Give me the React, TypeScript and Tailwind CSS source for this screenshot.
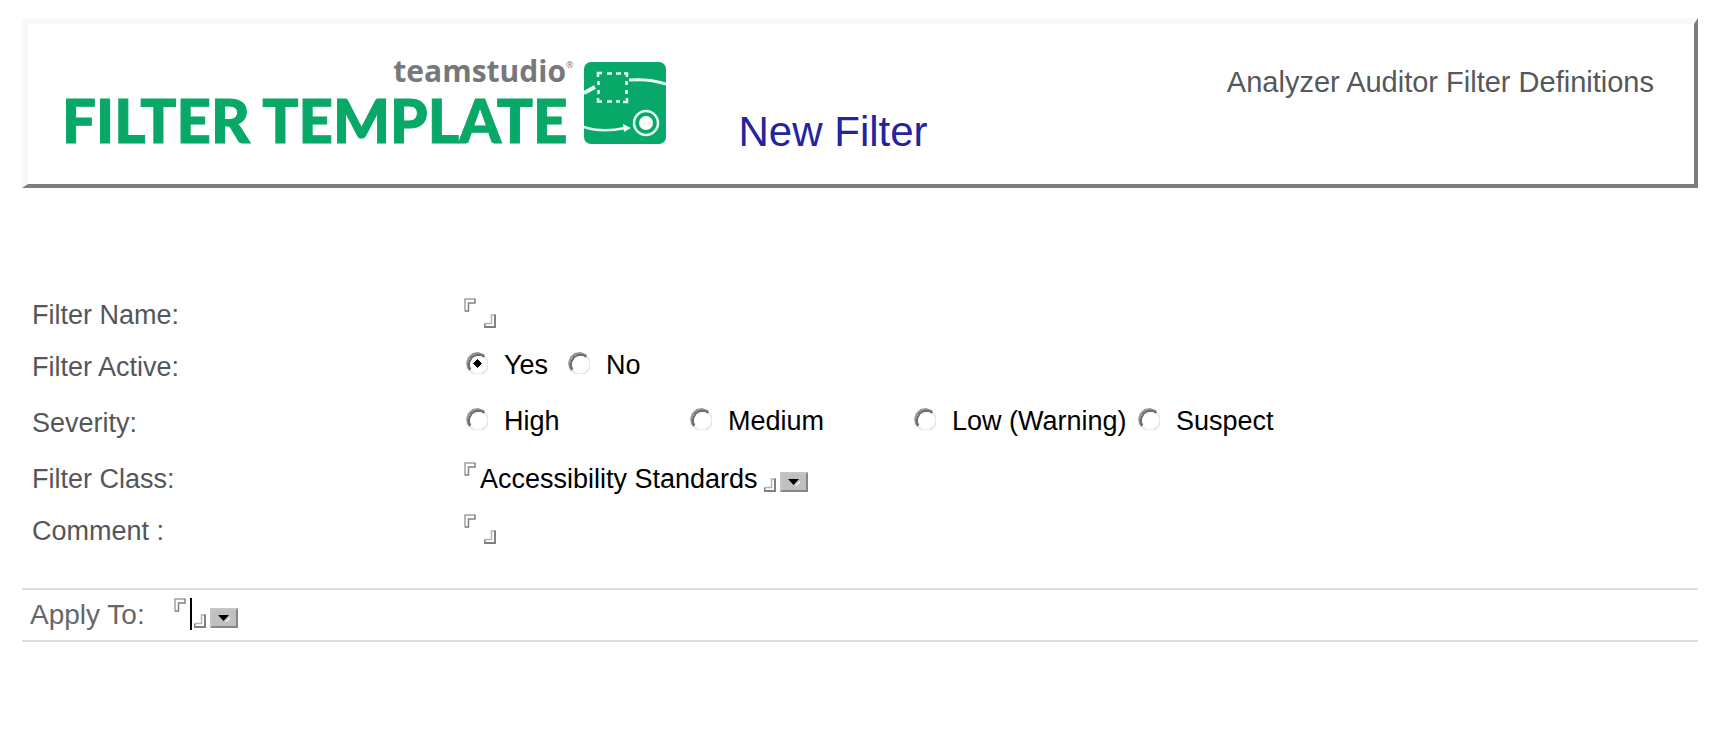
import { useState, type ReactNode } from 'react';

const severities = ['High', 'Medium', 'Low (Warning)', 'Suspect'];

function Corner({ end = false }: { end?: boolean }) {
  return (
    <svg viewBox="0 0 12 14" aria-hidden="true" className={`h-[14px] w-3 shrink-0 ${end ? 'self-end' : 'self-start'}`}>
      {end ? (
        <>
          <path d="M1 9.5h6.5V1H11" fill="none" stroke="#b4b4b4" strokeWidth="1.5" />
          <path d="M11 .5V13H.5V9.5" fill="none" stroke="#808080" strokeWidth="2" />
        </>
      ) : (
        <>
          <path d="M1 13.5V1h10.5" fill="none" stroke="#a0a0a0" strokeWidth="1.5" />
          <path d="M1 13h3.5V5H11V1" fill="none" stroke="#808080" strokeWidth="1.5" />
        </>
      )}
    </svg>
  );
}

function DropButton({ label }: { label: string }) {
  return (
    <button
      type="button"
      aria-label={label}
      className="ml-1 flex h-5 w-7 shrink-0 items-center justify-center self-end border-2 border-t-[#c6c6c6] border-r-[#868686] border-b-[#868686] border-l-[#c6c6c6] bg-[#c0c0c0]"
    >
      <svg viewBox="0 0 12 8" className="h-2 w-3">
        <path d="M2 8h5l5-5v2L8 8z" fill="#fff" />
        <path d="M0 1h11L5.500 7z" fill="#000" />
      </svg>
    </button>
  );
}

function Radio({ name, label, checked, onChange }: { name: string; label: string; checked: boolean; onChange: () => void }) {
  return (
    <label className="flex gap-4 whitespace-nowrap text-[27px] leading-[30px] text-black">
      <span className="relative mt-0.5 h-[22px] w-[22px] shrink-0">
        <input type="radio" name={name} checked={checked} onChange={onChange} className="absolute inset-0 h-full w-full appearance-none rounded-full" />
        <svg viewBox="0 0 22 22" aria-hidden="true" className="pointer-events-none absolute inset-0">
          <path d="M19.500 5.500A10 10 0 0 1 4.500 19" fill="none" stroke="#e4e4e4" strokeWidth="1.500" />
          <path d="M4 18.500A10 10 0 0 1 1.500 9.500L3 5.500L7 2L12 1L18.500 3.500" fill="none" stroke="#949494" strokeWidth="2" />
          <path d="M4.500 17.500A9 9 0 0 1 3.500 9.500L6 5L10 3L15 3L18.500 5" fill="none" stroke="#6c6c6c" strokeWidth="2" />
          {checked && <path d="M11.500 7.500L15.500 11.500L11.500 15.500L7.500 11.500Z" fill="#000" stroke="#000" strokeLinejoin="round" />}
        </svg>
      </span>
      {label}
    </label>
  );
}

function Row({ label, htmlFor, tall = false, children }: { label: string; htmlFor?: string; tall?: boolean; children: ReactNode }) {
  return (
    <div className={`flex items-start ${tall ? 'h-14' : 'h-[52px]'}`}>
      <label htmlFor={htmlFor} className="w-[432px] shrink-0 text-[27px] leading-[34px] text-[#55565a]">
        {label}
      </label>
      {children}
    </div>
  );
}

function TextField({ id }: { id: string }) {
  return (
    <div className="flex h-[30px]">
      <Corner />
      <input id={id} type="text" className="w-2 text-[27px] text-black outline-none" />
      <Corner end />
    </div>
  );
}

function Logo() {
  return (
    <div className="flex shrink-0 gap-2.5">
      <div className="flex flex-col items-end gap-[9px] whitespace-nowrap">
        <div className="flex font-['Open_Sans',sans-serif] text-[30px] leading-8 font-bold text-[#77787b]">
          teamstudio<span className="text-[9px] leading-5 font-normal">®</span>
        </div>
        <div className="pr-1.5 font-['Lato_Black',Lato,sans-serif] text-[60px] leading-[48px] font-black text-[#08a868] [-webkit-text-stroke:1px_#08a868]">
          FILTER TEMPLATE
        </div>
      </div>
      <svg viewBox="0 0 82 82" aria-hidden="true" className="h-[82px] w-[82px] self-end">
        <rect width="82" height="82" rx="7" fill="#08a868" />
        <g fill="none" stroke="#e9fff5">
          <path d="M0 31C4 29 7 27 11 25" strokeWidth="4" />
          <path d="M45 18C58 17 70 18 82 22" strokeWidth="3" />
          <path d="M0 65C12 69 27 69 41 66" strokeWidth="2.500" />
          <path d="M14 15V11H18M23 11.500h5M32 11.500h5M40 11.500H43V15M42.500 19v4M42.500 28v4M43 36V40H39M23 39.500h5M32 39.500h4M18 39.500H14V36M14.500 19v4M14.500 28v4" strokeWidth="2.500" />
          <circle cx="62" cy="61" r="12" strokeWidth="2.500" />
        </g>
        <path d="M39 62L47 66L40 70Z" fill="#e9fff5" />
        <circle cx="62" cy="61" r="7" fill="#fff" />
      </svg>
    </div>
  );
}

export default function App() {
  const [active, setActive] = useState('Yes');
  const [severity, setSeverity] = useState('');

  return (
    <main className="min-h-screen bg-white pt-[18px] pr-[26px] pl-[22px] font-['Liberation_Sans',Arial,sans-serif]">
      <header className="flex items-start border-t-[6px] border-r-4 border-b-4 border-l-[6px] border-t-[#f8f8fa] border-r-[#7d7d7d] border-b-[#7d7d7d] border-l-[#f8f8fc] pt-[31px] pr-10 pb-7 pl-[34px]">
        <Logo />
        <h1 className="mt-[53px] ml-[73px] text-[42px] leading-[48px] whitespace-nowrap text-[#24249c]">New Filter</h1>
        <p className="mt-[11px] ml-auto text-[29px] leading-8 whitespace-nowrap text-[#55585c]">Analyzer Auditor Filter Definitions</p>
      </header>

      <form>
        <div className="mt-[110px] pl-[10px]">
          <Row label="Filter Name:" htmlFor="filter-name">
            <TextField id="filter-name" />
          </Row>
          <Row label="Filter Active:" tall>
            <div className="flex gap-5 pl-0.5">
              {['Yes', 'No'].map((v) => (
                <Radio key={v} name="active" label={v} checked={active === v} onChange={() => setActive(v)} />
              ))}
            </div>
          </Row>
          <Row label="Severity:" tall>
            <div className="grid grid-cols-[repeat(4,224px)] pl-0.5">
              {severities.map((v) => (
                <Radio key={v} name="severity" label={v} checked={severity === v} onChange={() => setSeverity(v)} />
              ))}
            </div>
          </Row>
          <Row label="Filter Class:" htmlFor="filter-class">
            <div className="flex h-[30px]">
              <Corner />
              <select id="filter-class" className="mr-1.5 ml-1 h-[34px] appearance-none text-[27px] leading-[34px] text-black outline-none">
                <option>Accessibility Standards</option>
              </select>
              <Corner end />
              <DropButton label="Choose filter class" />
            </div>
          </Row>
          <Row label="Comment :" htmlFor="comment">
            <TextField id="comment" />
          </Row>
        </div>

        <div className="mt-[22px] flex border-y-2 border-[#dedede] py-2 pl-2">
          <label htmlFor="apply-to" className="w-36 shrink-0 text-[28px] leading-[34px] text-[#66676a]">
            Apply To:
          </label>
          <div className="flex h-[30px]">
            <Corner />
            <select id="apply-to" className="w-1 appearance-none outline-none">
              <option></option>
            </select>
            <span className="mr-0.5 h-8 w-0.5 bg-black" />
            <Corner end />
            <DropButton label="Choose what to apply to" />
          </div>
        </div>
      </form>
    </main>
  );
}
